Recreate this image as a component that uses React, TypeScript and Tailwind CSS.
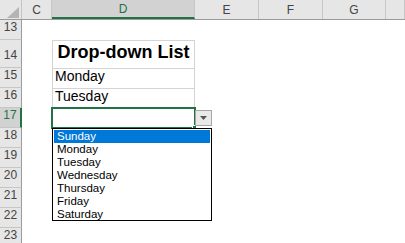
import React from "react";

const cols = [
  { name: "C", w: "w-[30px]" },
  { name: "D", w: "w-[143px]", active: true },
  { name: "E", w: "w-[64px]" },
  { name: "F", w: "w-[64px]" },
  { name: "G", w: "w-[63px]" },
  { name: "", w: "flex-1" },
];

const rows = [
  { n: 13, h: "h-[20px]" },
  { n: 14, h: "h-[28px]" },
  { n: 15, h: "h-[20px]" },
  { n: 16, h: "h-[20px]" },
  { n: 17, h: "h-[20px]", active: true },
  { n: 18, h: "h-[20px]" },
  { n: 19, h: "h-[20px]" },
  { n: 20, h: "h-[20px]" },
  { n: 21, h: "h-[20px]" },
  { n: 22, h: "h-[20px]" },
  { n: 23, h: "h-[20px]" },
];

const days = ["Sunday", "Monday", "Tuesday", "Wednesday", "Thursday", "Friday", "Saturday"];

function DCell({ row }: { row: number }) {
  if (row === 14)
    return (
      <div className="h-full border-x border-t border-[#d4d4d4] flex items-end justify-center pb-[2px] text-[18px] font-bold text-black">
        Drop-down List
      </div>
    );
  if (row === 15 || row === 16)
    return (
      <div className="h-full border-x border-t border-[#d4d4d4] flex items-end pl-[2px] pb-[1px] text-[14px] text-black">
        {row === 15 ? "Monday" : "Tuesday"}
      </div>
    );
  if (row === 17)
    return <div className="h-full border-t border-[#d4d4d4]" />;
  return null;
}

export default function App() {
  return (
    <div className="relative w-[405px] h-[243px] overflow-hidden bg-white font-['Liberation_Sans',Arial,sans-serif]">
      {/* column headers */}
      <div className="flex h-[20px] bg-[#e6e6e6] border-b border-[#9b9b9b]">
        <div className="w-[22px] shrink-0 relative border-r border-[#c6c6c6]">
          <svg className="absolute left-[7px] top-[7px]" width="12" height="11" viewBox="0 0 12 11">
            <polygon points="12,0 12,11 0,11" fill="#b4b4b4" />
          </svg>
        </div>
        {cols.map((c, i) => (
          <div
            key={i}
            className={
              c.w +
              " shrink-0 flex items-center justify-center text-[12px] border-r border-[#c6c6c6] " +
              (c.active
                ? "bg-[#d2d2d2] text-[#217346] border-b-2 border-b-[#217346]"
                : "text-[#444]")
            }
          >
            {c.name}
          </div>
        ))}
      </div>

      {/* rows */}
      {rows.map((r) => (
        <div key={r.n} className={"flex " + r.h}>
          <div
            className={
              "w-[22px] shrink-0 flex items-end justify-center pb-[3px] text-[12px] border-b border-[#c6c6c6] " +
              (r.active
                ? "bg-[#d2d2d2] text-[#217346] border-r-2 border-r-[#217346]"
                : "bg-[#e6e6e6] text-[#444] border-r border-r-[#9b9b9b]")
            }
          >
            {r.n}
          </div>
          <div className="w-[30px] shrink-0" />
          <div className="w-[143px] shrink-0">
            <DCell row={r.n} />
          </div>
          <div className="flex-1" />
        </div>
      ))}

      {/* selected cell D17 */}
      <div className="absolute left-[51px] top-[107px] w-[145px] h-[22px] border-2 border-[#217346]" />
      <div className="absolute left-[192px] top-[125px] w-[5px] h-[5px] bg-[#217346] border border-white" />

      {/* dropdown arrow button */}
      <div className="absolute left-[195px] top-[110px] w-[17px] h-[16px] bg-[#e9e9e9] border border-[#a6a6a6] flex items-center justify-center">
        <svg width="7" height="4" viewBox="0 0 7 4">
          <polygon points="0,0 7,0 3.5,4" fill="#555" />
        </svg>
      </div>

      {/* dropdown list */}
      <div className="absolute left-[52px] top-[128px] w-[160px] h-[93px] bg-white border border-black py-[1px] px-[1px]">
        {days.map((d, i) => (
          <div
            key={d}
            className={
              "h-[13px] leading-[13px] pl-[3px] text-[11.5px] " +
              (i === 0 ? "bg-[#0078d7] text-white" : "text-black")
            }
          >
            {d}
          </div>
        ))}
      </div>
    </div>
  );
}
